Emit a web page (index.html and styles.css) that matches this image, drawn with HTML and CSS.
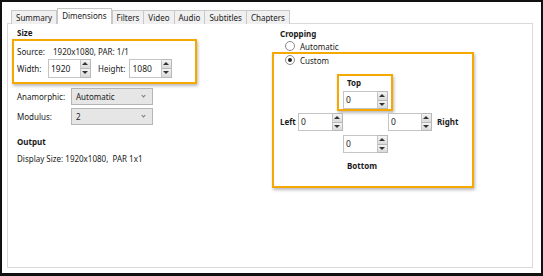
FILE: index.html
```html
<!DOCTYPE html>
<html lang="en">
<head>
    <meta charset="UTF-8">
    <meta name="viewport" content="width=device-width, initial-scale=1.0">
    <title>Dimensions</title>
    <link rel="stylesheet" href="styles.css">
</head>
<body>
    <div class="window">
        <div class="tabs">
            <div class="tab">Summary</div>
            <div class="tab active">Dimensions</div>
            <div class="tab">Filters</div>
            <div class="tab">Video</div>
            <div class="tab">Audio</div>
            <div class="tab">Subtitles</div>
            <div class="tab">Chapters</div>
        </div>

        <div class="panel">
            <div class="col col-left">
                <div class="heading">Size</div>
                <div class="mark size-box">
                    <div class="row source">
                        <span class="lbl-source">Source:</span>
                        <span>1920x1080, PAR: 1/1</span>
                    </div>
                    <div class="row dims">
                        <span class="lbl-width">Width:</span>
                        <div class="spin">
                            <div class="spin-val">1920</div>
                            <div class="spin-btns"><span class="up"></span><span class="down"></span></div>
                        </div>
                        <span class="lbl-height">Height:</span>
                        <div class="spin">
                            <div class="spin-val">1080</div>
                            <div class="spin-btns"><span class="up"></span><span class="down"></span></div>
                        </div>
                    </div>
                </div>

                <div class="row field first">
                    <span class="lbl-field">Anamorphic:</span>
                    <div class="select">Automatic<span class="chev"></span></div>
                </div>
                <div class="row field">
                    <span class="lbl-field">Modulus:</span>
                    <div class="select">2<span class="chev"></span></div>
                </div>

                <div class="heading output">Output</div>
                <div class="display">Display Size: 1920x1080,&nbsp; PAR 1x1</div>
            </div>

            <div class="col col-right">
                <div class="heading">Cropping</div>
                <div class="radio-row auto"><span class="radio"></span>Automatic</div>
                <div class="mark crop-box">
                    <div class="radio-row custom"><span class="radio checked"></span>Custom</div>
                    <div class="crop-grid">
                        <div class="mark top-box">
                            <div class="crop-lbl">Top</div>
                            <div class="spin small">
                                <div class="spin-val">0</div>
                                <div class="spin-btns"><span class="up"></span><span class="down"></span></div>
                            </div>
                        </div>
                        <div class="side-lbl left-lbl">Left</div>
                        <div class="spin small left-spin">
                            <div class="spin-val">0</div>
                            <div class="spin-btns"><span class="up"></span><span class="down"></span></div>
                        </div>
                        <div class="spin small right-spin">
                            <div class="spin-val">0</div>
                            <div class="spin-btns"><span class="up"></span><span class="down"></span></div>
                        </div>
                        <div class="side-lbl right-lbl">Right</div>
                        <div class="spin small bottom-spin">
                            <div class="spin-val">0</div>
                            <div class="spin-btns"><span class="up"></span><span class="down"></span></div>
                        </div>
                        <div class="crop-lbl bottom-lbl">Bottom</div>
                    </div>
                </div>
            </div>
        </div>
    </div>
</body>
</html>
```

FILE: styles.css
```css
* { box-sizing: border-box; }

body {
    margin: 0;
    background: #fff;
    font-family: 'Noto Sans', 'Open Sans', sans-serif;
    font-size: 8px;
    color: #1a1a1a;
}

.window {
    width: 543px;
    height: 276px;
    border: 2px solid #111;
    border-bottom-width: 3px;
    padding: 7px 8px 5px 5px;
    display: flex;
    flex-direction: column;
}

/* tab strip */
.tabs {
    display: flex;
    align-items: flex-end;
    height: 15px;
    padding-left: 4px;
    position: relative;
    z-index: 1;
}
.tab {
    height: 14px;
    padding: 0 4px;
    margin-right: -1px;
    border: 1px solid #c8c8c8;
    border-bottom: none;
    background: #f0f0f0;
    line-height: 13px;
    color: #1a1a1a;
}
.tab.active {
    height: 16px;
    background: #fff;
    padding: 0 4px;
    margin-left: 1px;
    margin-right: 0;
    line-height: 14px;
}

.panel {
    flex: 1;
    margin-top: -1px;
    border: 1px solid #d9d9d9;
    display: flex;
    padding: 2px 0 0 9px;
}

.col-left { width: 263px; }

.heading {
    font-weight: bold;
    height: 13px;
    line-height: 13px;
}

.row {
    display: flex;
    align-items: center;
}

/* orange call-out frames */
.mark {
    border: 2px solid #f5a800;
    box-shadow: 1px 2px 3px rgba(0, 0, 0, 0.28);
}

.size-box {
    width: 185px;
    margin-left: -5px;
    padding: 3px 0 4px 3px;
}
.source { height: 14px; }
.lbl-source { width: 36px; }
.dims { height: 20px; }
.lbl-width { width: 31px; }
.lbl-height { margin: 0 4px 0 7px; }

/* spin boxes */
.spin {
    display: flex;
    height: 19px;
}
.spin-val {
    width: 33px;
    border: 1px solid #c4c4c4;
    background: #fff;
    padding-left: 2px;
    line-height: 17px;
    font-size: 8.5px;
}
.spin-btns {
    width: 10px;
    display: flex;
    flex-direction: column;
    border: 1px solid #b8b8b8;
    border-left: none;
}
.spin-btns span {
    flex: 1;
    background: linear-gradient(#f4f4f4, #dadada);
    position: relative;
}
.spin-btns span + span { border-top: 1px solid #b8b8b8; }
.spin-btns span::after {
    content: "";
    position: absolute;
    left: 1px;
    top: 2px;
    border-left: 3.5px solid transparent;
    border-right: 3.5px solid transparent;
}
.spin-btns .up::after { border-bottom: 3px solid #333; }
.spin-btns .down::after { border-top: 3px solid #333; }

.spin.small { height: 18px; }
.spin.small .spin-val { width: 35px; line-height: 16px; }

/* drop downs */
.field { height: 20px; }
.field.first { margin-top: 2px; }
.lbl-field { width: 54px; }
.select {
    width: 82px;
    height: 17px;
    border: 1px solid #b5b5b5;
    background: #e6e6e6;
    padding-left: 4px;
    line-height: 15px;
    position: relative;
}
.chev {
    position: absolute;
    right: 7px;
    top: 5px;
    width: 3px;
    height: 3px;
    border-right: 1px solid #777;
    border-bottom: 1px solid #777;
    transform: rotate(45deg);
}

.output { margin-top: 9px; }
.display { margin-top: 4px; line-height: 13px; }

/* cropping */
.col-right .heading { margin-top: 1px; }
.radio-row {
    display: flex;
    align-items: center;
    height: 12px;
}
.radio {
    width: 10px;
    height: 10px;
    border: 1px solid #8a8a8a;
    border-radius: 50%;
    background: #fff;
    margin-right: 5px;
    position: relative;
}
.radio.checked::after {
    content: "";
    position: absolute;
    left: 2px;
    top: 2px;
    width: 4px;
    height: 4px;
    border-radius: 50%;
    background: #222;
}
.auto { margin-left: 5px; }

.crop-box {
    width: 202px;
    height: 136px;
    margin-left: -8px;
    padding: 0 0 0 6px;
}
.custom { margin-left: 5px; }

.crop-grid {
    display: grid;
    grid-template-columns: 18px 45px 45px 44px auto;
    grid-template-rows: auto 20px 22px auto;
    margin-top: 8px;
}
.top-box {
    grid-column: 3;
    grid-row: 1;
    margin: 0 -5px 0 -6px;
    padding: 0 0 0 4px;
}
.crop-lbl {
    font-weight: bold;
    height: 13px;
    line-height: 13px;
}
.top-box .crop-lbl { padding-left: 4px; margin-bottom: 2px; }
.side-lbl {
    font-weight: bold;
    grid-row: 2;
    align-self: end;
    line-height: 18px;
}
.left-lbl { grid-column: 1; }
.left-spin { grid-column: 2; grid-row: 2; align-self: end; }
.right-spin { grid-column: 4; grid-row: 2; align-self: end; }
.right-lbl { grid-column: 5; padding-left: 5px; }
.bottom-spin { grid-column: 3; grid-row: 3; align-self: end; }
.bottom-lbl { grid-column: 3; grid-row: 4; margin-top: 6px; padding-left: 4px; }
```
